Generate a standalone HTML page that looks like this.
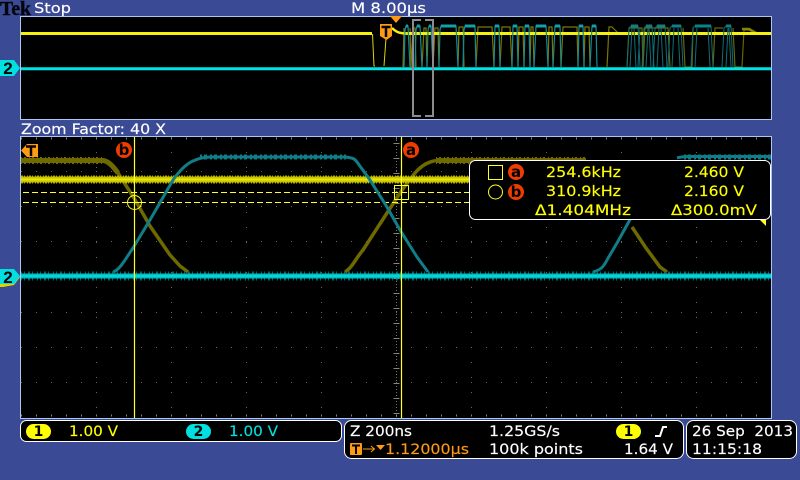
<!DOCTYPE html>
<html lang="en">
<head>
<meta charset="utf-8">
<title>Oscilloscope</title>
<style>
html,body{margin:0;padding:0;background:#3b4a94;width:800px;height:480px;overflow:hidden}
svg{display:block}
text{font-family:"DejaVu Sans","Liberation Sans",sans-serif;font-size:14.500px;white-space:pre;stroke-width:.15px}
.w{fill:#fff;stroke:#fff}.y{fill:#ffff00;stroke:#ffff00}.c{fill:#00e0e0;stroke:#00e0e0}.o{fill:#ff9a14;stroke:#ff9a14}
.bd{font-weight:bold;fill:#000;text-anchor:middle}
</style>
</head>
<body>
<svg width="800" height="480" viewBox="0 0 800 480" xmlns="http://www.w3.org/2000/svg">
<rect width="800" height="480" fill="#3b4a94"/>

<!-- header -->
<text x="0" y="15" textLength="31" lengthAdjust="spacingAndGlyphs" style="font-family:'Liberation Serif',serif;font-weight:bold;font-size:20px;fill:#05050f;stroke:#05050f;stroke-width:.4px">Tek</text>
<text class="w" x="34" y="13" textLength="37" lengthAdjust="spacingAndGlyphs">Stop</text>
<text class="w" x="351" y="13" textLength="75" lengthAdjust="spacingAndGlyphs">M 8.00µs</text>

<!-- top panel -->
<rect x="20.500" y="16.500" width="751" height="103" fill="#000" stroke="#a8c8f0" stroke-width="1"/>
<g fill="none">
  <path stroke="#7d7600" stroke-width="1.200" d="M403 67L404 28M410 28L411 67 413 28H415L416 67M422 67L424 28H426L427 67M433 67L435 28H438L439 67M458 67L459 27H463L464 67M476 67L478 27H492L494 67M500 67L502 27H510L512 67M518 67L519 27H523L524 67M530 67L531 27H533L534 67M548 67L549 27H552L553 67M561 67L563 27H577L578 67M584 67L585 27H589L590 67M607 67L609 27H612L618 33M620 33H628"/>
  <path stroke="#6a6400" stroke-width="1.200" d="M627 67L629 28H642L643 67 645 28H668L670 67M683 28L685 67H692L693 28M713 67L715 28H723M733 28L735 67H742L744 30H749L757 34"/>
  <path stroke="#8a8200" stroke-width="2.500" d="M742 29H749L756 33"/>
  <path stroke="#f4f010" stroke-width="3" d="M21 33.500H372M404 33.500H771"/>
  <path stroke="#d8d800" stroke-width="1" d="M372.500 34L374 66H375M384 66L386 38"/>
  <path stroke="#f4f010" stroke-width="2.500" d="M392 28C395 31 398 33 404 33.500"/>
  <path stroke="#0f8d98" stroke-width="1.200" d="M404 67L405 30 406 26H408L410 67M415 67L416 30 417 26H420L422 67M427 67L428 30 429 26H431L433 67M439 67L440 30 441 26H456L458 67M463 67L464 30 465 26H475L476 67M494 67L495 26H499L500 67M512 67L513 26H517L518 67M524 67L525 26H529L530 67M534 67L536 26H546L548 67M553 67L555 26H560L561 67M578 67L579 26H583L584 67M590 67L592 26H596L597 67"/>
  <path stroke="#12a0aa" stroke-width="3" d="M406 26H408M417 26H420M429 26H431M441 26H456M465 26H475M495 26H499M513 26H517M525 26H529M536 26H546M555 26H560M579 26H583M592 26H596"/>
  <path stroke="#0c6e78" stroke-width="1" d="M627 67L629 28 631 26H638L640 67M630 67L632 28M634 28L636 67M638 67L640 28M642 67L644 28 646 26H652L654 67M646 67L648 28M649 28L651 67M653 67L655 28 657 26H665L667 67M657 67L659 28M661 28L663 67M668 67L670 28 672 26H681L683 67M672 67L674 28M678 28L680 67M691 67L693 28 695 26H711L713 67M695 67L697 28M708 28L710 67M722 67L724 28 726 26H731L733 67M726 67L728 28M729 28L731 67"/>
  <path stroke="#0e808a" stroke-width="3" d="M631 26H638M646 26H652M657 26H665M672 26H681M695 26H711M726 26H731"/>
  <path stroke="#00e4e8" stroke-width="3" d="M21 68.800H771"/>
  <path stroke="#8e8a90" stroke-width="2" d="M421 20H413V116H421M425 20H433V116H425"/>
</g>
<!-- top markers -->
<path d="M390 16H402L396 23Z" fill="#ff9a14"/>
<path d="M380 24H392V36L386.500 40 380 36Z" fill="#ff9a14"/>
<path d="M381.500 27H390.500M386 27V37" stroke="#000" stroke-width="2.500" fill="none"/>
<path d="M0 60H14L20 68 14 76H0Z" fill="#00e0e0"/>
<text class="bd" x="8" y="74" style="font-size:17px;font-family:'Liberation Sans',sans-serif">2</text>

<text class="w" x="21" y="134" textLength="145" lengthAdjust="spacingAndGlyphs">Zoom Factor: 40 X</text>

<!-- zoom panel -->
<rect x="20.500" y="136.500" width="751" height="282" fill="#000" stroke="#a8c8f0" stroke-width="1"/>
<g fill="none" stroke="#6a6658" stroke-width="1">
  <path stroke-dasharray="1 14" d="M21 171.500H771M21 206.500H771M21 241.500H771M21 312.500H771M21 347.500H771M21 382.500H771"/>
  <path stroke-dasharray="1 14" d="M96.500 137V418M171.500 137V418M246.500 137V418M321.500 137V418M471.500 137V418M546.500 137V418M621.500 137V418M696.500 137V418"/>
  <path stroke-dasharray="1 2" stroke="#7a7666" d="M396.500 137V418"/>
  <path stroke-dasharray="1 14" stroke="#8a8474" stroke-width="2" d="M21 138.500H771M21 415.500H771"/>
  <path stroke-dasharray="1 14" stroke="#8a8474" stroke-width="6" d="M396.500 143V418"/>
</g>
<g fill="none" stroke-linejoin="round" stroke-linecap="butt">
  <path stroke="#6e6a00" stroke-width="3.500" d="M118 173L134 198 150 226 170 255 180 266 188 272M345 272C352 268 356 258 363 250L387 213 402 190 415 173C422 165 428 162 436 160.500M632 227L646 248 660 267 667 272"/>
  <path stroke="#6e6a00" stroke-width="5" d="M21 160.500H103C108 161 112 165 118 173M436 160.500H586"/>
  <path stroke="#6e6a00" stroke-width="7" stroke-dasharray="1 2 2 3" d="M21 160.500H103M436 160.500H586"/>
  <path stroke="#aaa600" stroke-width="8" stroke-dasharray="2 1 1 2 1 1" d="M21 179.500H771"/>
  <path stroke="#c8c400" stroke-width="6" d="M21 179.500H771"/>
  <path stroke="#e8e410" stroke-width="2" d="M21 179.500H771"/>
  <path stroke="#ffff20" stroke-width="1" stroke-dasharray="6 3" d="M23 192.500H470M23 202.500H470"/>
  <path stroke="#0f7e88" stroke-width="3" d="M113 272C120 270 126 258 133 248L150 220 173 180C180 170 186 164 193 161 200 158 204 157 212 157H346C352 158 354 158 357 162L370 180 387 207 400 230 417 257 428 272M593 272C600 270 603 268 607 260L617 243 632 216M677 158C680 157 684 156.500 690 156.500H771"/>
  <path stroke="#0f7e88" stroke-width="5" stroke-dasharray="2 2 3 3" d="M200 157H346M684 157H771"/>
  <path stroke="#0a6268" stroke-width="9" stroke-dasharray="1 2 1 3 2 2 1 4" d="M21 276H771"/>
  <path stroke="#00c0c4" stroke-width="5" d="M21 276H771"/>
  <path stroke="#00dce0" stroke-width="1.500" d="M21 276H771"/>
  <path stroke="#ffff20" stroke-width="1.200" d="M134.500 137V418M401.500 137V418"/>
  <circle cx="134.500" cy="202.500" r="7" stroke="#ffff20" stroke-width="1"/>
  <path stroke="#ffff20" d="M127 202.500H142"/>
  <rect x="394.500" y="185.500" width="14" height="14" stroke="#ffff20" stroke-width="1"/>
</g>
<!-- badges -->
<circle cx="124" cy="150" r="8" fill="#f03c00"/><text class="bd" x="124" y="155" style="font-size:15px">b</text>
<circle cx="411" cy="150" r="8" fill="#f03c00"/><text class="bd" x="411" y="155" style="font-size:15px">a</text>
<!-- zoom markers -->
<path d="M21 150.500L27 144H38V157H27Z" fill="#ff9a14"/>
<path d="M26 146.500H36M31 146.500V156" stroke="#000" stroke-width="2.500" fill="none"/>
<path d="M0 271H14L20 277 14 285 3 287H0Z" fill="#d8d800"/>
<path d="M0 269H14L20 276 14 284H0Z" fill="#00e0e0"/>
<text class="bd" x="8" y="283" style="font-size:17px;font-family:'Liberation Sans',sans-serif">2</text>

<!-- readout -->
<rect x="469.500" y="160.500" width="301" height="59" rx="6" fill="#000" stroke="#fff" stroke-width="1"/>
<rect x="488.500" y="165.500" width="14" height="14" fill="none" stroke="#ffff20"/>
<circle cx="495.500" cy="192" r="7" fill="none" stroke="#ffff20"/>
<circle cx="516" cy="172" r="8" fill="#f03c00"/><text class="bd" x="516" y="177" style="font-size:15px">a</text>
<circle cx="516" cy="192" r="8" fill="#f03c00"/><text class="bd" x="516" y="197" style="font-size:15px">b</text>
<text class="y" x="546" y="177" textLength="75" lengthAdjust="spacingAndGlyphs">254.6kHz</text>
<text class="y" x="684" y="177" textLength="60" lengthAdjust="spacingAndGlyphs">2.460 V</text>
<text class="y" x="546" y="196" textLength="75" lengthAdjust="spacingAndGlyphs">310.9kHz</text>
<text class="y" x="684" y="196" textLength="60" lengthAdjust="spacingAndGlyphs">2.160 V</text>
<text class="y" x="535" y="215" textLength="96" lengthAdjust="spacingAndGlyphs">Δ1.404MHz</text>
<text class="y" x="671" y="215" textLength="86" lengthAdjust="spacingAndGlyphs">Δ300.0mV</text>
<path d="M760 220H766V226Z" fill="#ffff20"/>

<!-- bottom: channels -->
<rect x="20.500" y="420.500" width="321" height="21" rx="6" fill="#000" stroke="#fff"/>
<rect x="26" y="424" width="25" height="15" rx="7.500" fill="#ffff00"/>
<text class="bd" x="38.500" y="436" style="font-size:14px">1</text>
<text class="y" x="69" y="436" textLength="49" lengthAdjust="spacingAndGlyphs">1.00 V</text>
<rect x="186" y="424" width="25" height="15" rx="7.500" fill="#00e0e0"/>
<text class="bd" x="198.500" y="436" style="font-size:14px">2</text>
<text class="c" x="229" y="436" textLength="49" lengthAdjust="spacingAndGlyphs">1.00 V</text>

<!-- bottom: timebase -->
<rect x="344.500" y="420.500" width="339" height="38" rx="7" fill="#000" stroke="#fff"/>
<text class="w" x="350" y="436" textLength="62" lengthAdjust="spacingAndGlyphs">Z 200ns</text>
<text class="w" x="489" y="436" textLength="71" lengthAdjust="spacingAndGlyphs">1.25GS/s</text>
<rect x="616" y="424" width="25" height="15" rx="7.500" fill="#ffff00"/>
<text class="bd" x="628.500" y="436" style="font-size:14px">1</text>
<path d="M655 436H660L663 427H667" fill="none" stroke="#fff" stroke-width="2"/>
<rect x="350" y="443" width="12" height="12" rx="1" fill="#ff9a14"/>
<path d="M352 445.500H360M356 445.500V454" stroke="#000" stroke-width="2" fill="none"/>
<path d="M363 449H374M371 446L374.500 449 371 452" stroke="#ff9a14" fill="none"/>
<path d="M376 445H385L380.500 450Z" fill="#ff9a14"/>
<text class="o" x="385" y="454" textLength="84" lengthAdjust="spacingAndGlyphs">1.12000µs</text>
<text class="w" x="489" y="454" textLength="94" lengthAdjust="spacingAndGlyphs">100k points</text>
<text class="w" x="624" y="454" textLength="49" lengthAdjust="spacingAndGlyphs">1.64 V</text>

<!-- bottom: date -->
<rect x="686.500" y="420.500" width="110" height="38" rx="7" fill="#000" stroke="#fff"/>
<text class="w" x="692" y="436" textLength="101" lengthAdjust="spacingAndGlyphs">26 Sep  2013</text>
<text class="w" x="692" y="454" textLength="70" lengthAdjust="spacingAndGlyphs">11:15:18</text>
</svg>
</body>
</html>
